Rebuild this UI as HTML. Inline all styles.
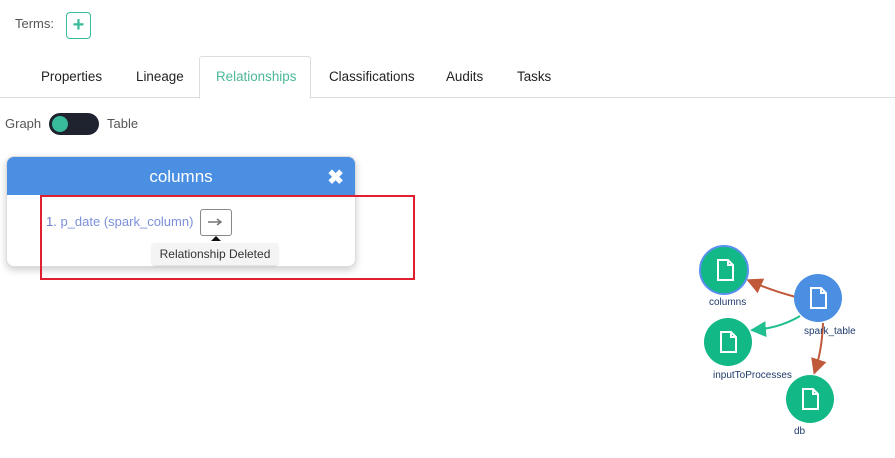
<!DOCTYPE html>
<html><head><style>
body{margin:0;width:895px;height:458px;background:#fff;font-family:"Liberation Sans",sans-serif;position:relative;overflow:hidden;color:#333}
.a{position:absolute}
.tab{position:absolute;top:69px;font-size:13.4px;color:#222}
</style></head><body>
<div class="a" style="left:15px;top:16px;font-size:13px;color:#555">Terms:</div>
<div class="a" style="left:66px;top:12px;width:23px;height:25px;border:1px solid #38bb9b;border-radius:4px;color:#38bb9b;font-size:20px;font-weight:bold;text-align:center;line-height:24px">+</div>
<div class="a" style="left:0;top:97px;width:895px;height:1px;background:#ddd"></div>
<div class="a" style="left:199px;top:56px;width:110px;height:41px;border:1px solid #ddd;border-bottom:1px solid #fff;border-radius:3px 3px 0 0;background:#fff"></div>
<div class="tab" style="left:41px">Properties</div>
<div class="tab" style="left:136px">Lineage</div>
<div class="tab" style="left:216px;color:#4cb897">Relationships</div>
<div class="tab" style="left:329px">Classifications</div>
<div class="tab" style="left:446px">Audits</div>
<div class="tab" style="left:517px">Tasks</div>
<div class="a" style="left:5px;top:116px;font-size:13px;color:#555">Graph</div>
<div class="a" style="left:49px;top:113px;width:50px;height:22px;border-radius:11px;background:#1f2330"></div>
<div class="a" style="left:52px;top:116px;width:16px;height:16px;border-radius:50%;background:#38bb9b"></div>
<div class="a" style="left:107px;top:116px;font-size:13px;color:#555">Table</div>
<div class="a" style="left:6px;top:156px;width:348px;height:109px;border:1px solid #ddd;border-radius:8px;box-shadow:0 3px 8px rgba(0,0,0,.2);overflow:hidden;background:#fff">
 <div style="height:38px;background:#4a8fe2;color:#fff;font-size:17px;text-align:center;line-height:40px">columns</div>
 <div class="a" style="right:11px;top:8px;color:#fff;font-size:20px;font-weight:bold">✖</div>
</div>
<div class="a" style="left:46px;top:214px;font-size:13px;color:#6e7ec8">1. <span style="color:#7b8fdc">p_date (spark_column)</span></div>
<div class="a" style="left:200px;top:209px;width:30px;height:25px;border:1px solid #888;border-radius:3px"></div>
<svg class="a" style="left:207px;top:217px" width="16" height="10"><path d="M1,5H14M10,2L14,5L10,8" fill="none" stroke="#777" stroke-width="1.5"/></svg>
<div class="a" style="left:211px;top:236px;width:0;height:0;border:5px solid transparent;border-bottom-color:#111;border-top:0"></div>
<div class="a" style="left:152px;top:243px;width:126px;height:22px;background:#f4f4f4;border-radius:3px;box-shadow:0 1px 2px rgba(0,0,0,.15);font-size:12px;text-align:center;line-height:22px;color:#333">Relationship Deleted</div>
<div class="a" style="left:40px;top:195px;width:371px;height:81px;border:2px solid #e02030"></div>
<svg class="a" style="left:0;top:0" width="895" height="458">
<defs>
<marker id="r" markerWidth="8" markerHeight="8" refX="6" refY="4" orient="auto"><path d="M0,0L8,4L0,8z" fill="#c0583a"/></marker>
<marker id="g" markerWidth="8" markerHeight="8" refX="6" refY="4" orient="auto"><path d="M0,0L8,4L0,8z" fill="#1fbf8f"/></marker>
<g id="doc"><path d="M-7,-10H3L8,-5V10H-7Z M3,-10V-5H8" fill="none" stroke="#fff" stroke-width="2"/></g>
</defs>
<path d="M796,297 Q770,290 750,281" fill="none" stroke="#c0583a" stroke-width="2" marker-end="url(#r)"/>
<path d="M800,316 Q780,328 754,330" fill="none" stroke="#1fbf8f" stroke-width="2" marker-end="url(#g)"/>
<path d="M823,323 Q822,350 815,371" fill="none" stroke="#c0583a" stroke-width="2" marker-end="url(#r)"/>
<circle cx="724" cy="270" r="24" fill="#12b886" stroke="#5a8ff0" stroke-width="2"/><use href="#doc" x="725" y="270"/>
<circle cx="818" cy="298" r="24" fill="#4a8fe2"/><use href="#doc" x="818" y="298"/>
<circle cx="728" cy="342" r="24" fill="#12b886"/><use href="#doc" x="728" y="342"/>
<circle cx="810" cy="399" r="24" fill="#12b886"/><use href="#doc" x="810" y="399"/>
<g font-size="10" fill="#1f3b6b" font-family="Liberation Sans,sans-serif">
<text x="709" y="305">columns</text><text x="804" y="334">spark_table</text>
<text x="713" y="378">inputToProcesses</text><text x="794" y="434">db</text></g>
</svg>
</body></html>
